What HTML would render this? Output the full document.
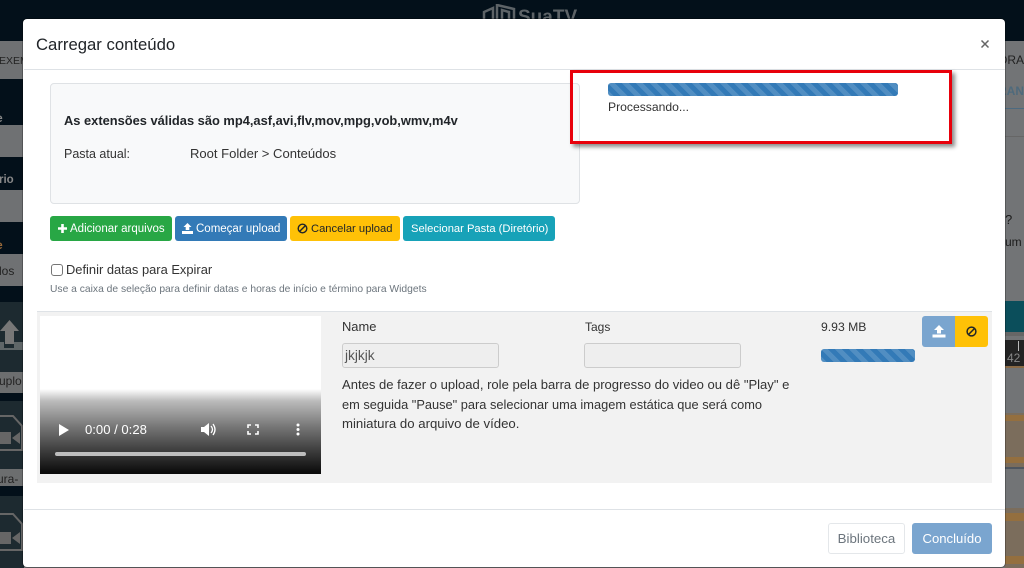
<!DOCTYPE html>
<html lang="pt"><head><meta charset="utf-8"><title>Carregar conteúdo</title>
<style>
*{box-sizing:border-box}
html,body{margin:0;padding:0;width:1024px;height:568px;overflow:hidden;background:#6f7173;font-family:"Liberation Sans",sans-serif;color:#212529}
.a{position:absolute}
.t{position:absolute;white-space:nowrap}
.btn{position:absolute;height:25px;top:216px;border-radius:3px}
.stripe{background-color:#337ab7;background-image:linear-gradient(45deg,rgba(255,255,255,.15) 25%,transparent 25%,transparent 50%,rgba(255,255,255,.15) 50%,rgba(255,255,255,.15) 75%,transparent 75%,transparent);background-size:14px 14px;border-radius:3px}
svg{position:absolute;display:block}
</style></head><body>
<!-- background -->
<div class="a" style="left:0;top:0;width:1024px;height:41px;background:#03101a"></div>
<div class="a" style="left:0;top:79px;width:24px;height:46px;background:#03101a"></div>
<div class="a" style="left:0;top:157px;width:24px;height:33px;background:#03101a"></div>
<div class="a" style="left:0;top:222px;width:24px;height:32px;background:#03101a"></div>
<div class="a" style="left:0;top:286px;width:24px;height:16px;background:#03101a"></div>
<div class="a" style="left:0;top:302px;width:24px;height:70px;background:#1d2a30"></div>
<div class="a" style="left:0;top:372px;width:24px;height:30px;background:#6c6e6f"></div>
<div class="a" style="left:0;top:393px;width:24px;height:8px;background:#03101a"></div>
<div class="a" style="left:0;top:401px;width:24px;height:68px;background:#1d2a30"></div>
<div class="a" style="left:0;top:469px;width:24px;height:17px;background:#6c6e6f"></div>
<div class="a" style="left:0;top:486px;width:24px;height:10px;background:#03101a"></div>
<div class="a" style="left:0;top:496px;width:24px;height:72px;background:#1d2a30"></div>
<div class="t" style="left:-1px;top:54px;font-size:10.5px;line-height:14px;color:#222">EXEM</div>
<div class="t" style="left:-4px;top:111px;font-size:12px;font-weight:bold;color:#888">e</div>
<div class="t" style="left:-1px;top:174px;font-size:11.5px;font-weight:bold;color:#888">rio</div>
<div class="t" style="left:-4px;top:238px;font-size:12px;font-weight:bold;color:#9a6a3a">e</div>
<div class="t" style="left:-5px;top:264px;font-size:12px;color:#222">dos</div>
<div class="t" style="left:-1px;top:374px;font-size:12px;color:#222">uplo</div>
<div class="t" style="left:-3px;top:472px;font-size:12px;color:#222">ura-</div>
<svg style="left:0;top:318px" width="24" height="34" viewBox="0 0 24 34"><path d="M0 24 H4 V30 H14 V24 H24 V32 H0Z" fill="#5f6668"/><path d="M9.5 2 L19 13 H14 V26 H5 V13 H0Z" fill="#777"/></svg>
<svg style="left:0;top:414px" width="24" height="42" viewBox="0 0 24 42"><path d="M0 2 H13 L22 12 V36 H0" fill="none" stroke="#666" stroke-width="2"/><path d="M0 18 H11 V30 H0Z M12 24 L20 18 V30Z" fill="#666"/></svg>
<svg style="left:0;top:512px" width="24" height="44" viewBox="0 0 24 44"><path d="M0 2 H13 L22 12 V38 H0" fill="none" stroke="#666" stroke-width="2"/><path d="M0 20 H11 V32 H0Z M12 26 L20 20 V32Z" fill="#666"/></svg>
<svg style="left:482px;top:4px" width="36" height="15" viewBox="0 0 36 15"><path d="M2 15 V8 L11 4 V15 M15 15 V1 L32 5 V15 M20 15 V6 L27 8 V15" fill="none" stroke="#5d6367" stroke-width="2.5"/></svg>
<div class="t" style="left:518px;top:7px;font-size:19px;font-weight:bold;color:#5d6367">SuaTV</div>
<!-- right bg -->
<div class="a" style="left:1005px;top:41px;width:19px;height:527px;background:#727476"></div>
<div class="t" style="left:1005px;top:53px;width:19px;overflow:hidden;font-size:12px;color:#222;direction:rtl">ORA</div>
<div class="t" style="left:1005px;top:84px;width:19px;overflow:hidden;font-size:12px;font-weight:bold;color:#4e6a7c;direction:rtl">RAN</div>
<div class="a" style="left:1005px;top:108px;width:19px;height:1px;background:#4c6a80"></div>
<div class="a" style="left:1005px;top:136px;width:19px;height:1px;background:#666"></div>
<div class="t" style="left:1005px;top:212px;font-size:13px;color:#1b1b1b">?</div>
<div class="t" style="left:1005px;top:235px;font-size:12px;color:#1b1b1b">um</div>
<div class="a" style="left:1005px;top:301px;width:19px;height:31px;background:#0b4e5b"></div>
<div class="a" style="left:1005px;top:332px;width:19px;height:4px;background:#666"></div>
<div class="a" style="left:1005px;top:340px;width:19px;height:26px;background:#232323"></div>
<div class="a" style="left:1018px;top:341px;width:1px;height:10px;background:#bbb"></div>
<div class="t" style="left:1007px;top:351px;font-size:12px;color:#888">42</div>
<div class="a" style="left:1005px;top:366px;width:19px;height:2px;background:#8a6a45"></div>
<div class="a" style="left:1005px;top:413px;width:19px;height:54px;background:#7b6d5c"></div>
<div class="a" style="left:1005px;top:415px;width:19px;height:6px;background:#946f3f"></div>
<div class="a" style="left:1005px;top:457px;width:19px;height:6px;background:#946f3f"></div>
<div class="a" style="left:1005px;top:467px;width:19px;height:2px;background:#4e5660"></div>
<div class="a" style="left:1005px;top:508px;width:19px;height:60px;background:#7b6d5c"></div>
<div class="a" style="left:1005px;top:513px;width:19px;height:8px;background:#946f3f"></div>
<div class="a" style="left:1005px;top:556px;width:19px;height:8px;background:#946f3f"></div>
<!-- modal -->
<div class="a" style="left:23px;top:19px;width:982px;height:548px;background:#fff;border-radius:4px 4px 4px 4px;box-shadow:0 0 0 1px rgba(0,0,0,.25)"></div>
<div class="t" style="left:36px;top:35px;font-size:16.7px;line-height:20px;color:#212529">Carregar conteúdo</div>
<svg style="left:980px;top:39px" width="10" height="10" viewBox="0 0 10 10"><path d="M1.5 1.5 L8.5 8.5 M8.5 1.5 L1.5 8.5" stroke="#666" stroke-width="1.5"/></svg>
<div class="a" style="left:24px;top:69px;width:981px;height:1px;background:#dee2e6"></div>
<!-- info panel -->
<div class="a" style="left:50px;top:83px;width:530px;height:121px;background:#f8f9fa;border:1px solid #dfe2e5;border-radius:4px"></div>
<div class="t" style="left:64px;top:113px;font-size:12.86px;line-height:16px;font-weight:bold;color:#212529">As extensões válidas são mp4,asf,avi,flv,mov,mpg,vob,wmv,m4v</div>
<div class="t" style="left:64px;top:146px;font-size:12.5px;line-height:16px;color:#333">Pasta atual:</div>
<div class="t" style="left:190px;top:146px;font-size:13.05px;line-height:16px;color:#333">Root Folder &gt; Conteúdos</div>
<!-- progress + highlight -->
<div class="a stripe" style="left:608px;top:83px;width:290px;height:13px"></div>
<div class="t" style="left:608px;top:99px;font-size:12.15px;line-height:16px;color:#333">Processando...</div>
<div class="a" style="left:570px;top:70px;width:382px;height:74px;border:3px solid #e8000b;box-shadow:3px 3px 4px rgba(0,0,0,.45)"></div>
<!-- buttons -->
<div class="btn" style="left:50px;width:122px;background:#28a745"></div>
<svg style="left:58px;top:224px" width="9" height="9" viewBox="0 0 9 9"><path d="M3.2 0 H5.8 V3.2 H9 V5.8 H5.8 V9 H3.2 V5.8 H0 V3.2 H3.2Z" fill="#fff"/></svg>
<div class="t" style="left:70px;top:222px;font-size:11.5px;line-height:15px;color:#fff">Adicionar arquivos</div>
<div class="btn" style="left:175px;width:112px;background:#337ab7"></div>
<svg style="left:182px;top:223px" width="11" height="11" viewBox="0 0 11 11"><path d="M5.5 0 L9.5 4 H7.3 V7 H3.7 V4 H1.5Z M0 8 H11 V11 H0Z" fill="#fff"/></svg>
<div class="t" style="left:196px;top:222px;font-size:11.5px;line-height:15px;color:#fff">Começar upload</div>
<div class="btn" style="left:290px;width:110px;background:#ffc107"></div>
<svg style="left:297px;top:223px" width="11" height="11" viewBox="0 0 11 11"><circle cx="5.5" cy="5.5" r="4.3" fill="none" stroke="#212529" stroke-width="1.4"/><path d="M2.5 8.5 L8.5 2.5" stroke="#212529" stroke-width="1.4"/></svg>
<div class="t" style="left:311px;top:222px;font-size:11.2px;line-height:15px;color:#212529">Cancelar upload</div>
<div class="btn" style="left:403px;width:152px;background:#17a2b8"></div>
<div class="t" style="left:411px;top:222px;font-size:11.2px;line-height:15px;color:#fff">Selecionar Pasta (Diretório)</div>
<!-- checkbox -->
<div class="a" style="left:51px;top:264px;width:12px;height:12px;border:1px solid #767676;border-radius:3px;background:#fff"></div>
<div class="t" style="left:66px;top:262px;font-size:12.9px;line-height:16px;color:#333">Definir datas para Expirar</div>
<div class="t" style="left:50px;top:283px;font-size:10.3px;line-height:14px;color:#6c757d">Use a caixa de seleção para definir datas e horas de início e término para Widgets</div>
<!-- file row -->
<div class="a" style="left:37px;top:311px;width:955px;height:172px;background:#f2f2f2;border-top:1px solid #dee2e6"></div>
<div class="a" style="left:40px;top:316px;width:281px;height:158px;background:linear-gradient(to bottom,#fff 0,#fff 73px,#bbb 85px,#787878 110px,#3c3c3c 135px,#0f0f0f 155px,#0b0b0b 158px)"></div>
<svg style="left:59px;top:424px" width="10" height="12" viewBox="0 0 10 12"><path d="M0 0 L10 6 L0 12Z" fill="#fff"/></svg>
<div class="t" style="left:85px;top:422px;font-size:13.1px;line-height:15px;color:#fff">0:00 / 0:28</div>
<svg style="left:201px;top:422px" width="16" height="15" viewBox="0 0 16 15"><path d="M0 5 H3 L8 1 V14 L3 10 H0Z" fill="#fff"/><path d="M10 4 Q13 7.5 10 11 M12 2 Q16 7.5 12 13" fill="none" stroke="#fff" stroke-width="1.3"/></svg>
<svg style="left:247px;top:424px" width="12" height="11" viewBox="0 0 12 11"><path d="M1 4 V1 H4 M8 1 H11 V4 M11 7 V10 H8 M4 10 H1 V7" fill="none" stroke="#fff" stroke-width="1.6"/></svg>
<svg style="left:296px;top:423px" width="4" height="13" viewBox="0 0 4 13"><circle cx="2" cy="2" r="1.5" fill="#fff"/><circle cx="2" cy="6.5" r="1.5" fill="#fff"/><circle cx="2" cy="11" r="1.5" fill="#fff"/></svg>
<div class="a" style="left:55px;top:452px;width:251px;height:4px;background:#bdbdbd;border-radius:2px"></div>
<div class="t" style="left:342px;top:319px;font-size:12.9px;line-height:16px;color:#333">Name</div>
<div class="t" style="left:585px;top:319px;font-size:12px;line-height:16px;color:#333">Tags</div>
<div class="a" style="left:342px;top:343px;width:157px;height:25px;background:#eee;border:1px solid #ccc;border-radius:3px"></div>
<div class="t" style="left:345px;top:348px;font-size:13.7px;line-height:16px;color:#555">jkjkjk</div>
<div class="a" style="left:584px;top:343px;width:157px;height:25px;background:#eee;border:1px solid #ccc;border-radius:3px"></div>
<div class="t" style="left:342px;top:375px;font-size:13.05px;line-height:20px;color:#333">Antes de fazer o upload, role pela barra de progresso do video ou dê "Play" e</div>
<div class="t" style="left:342px;top:395px;font-size:12.82px;line-height:20px;color:#333">em seguida "Pause" para selecionar uma imagem estática que será como</div>
<div class="t" style="left:342px;top:414px;font-size:13.2px;line-height:20px;color:#333">miniatura do arquivo de vídeo.</div>
<div class="t" style="left:821px;top:319px;font-size:12.2px;line-height:16px;color:#333">9.93 MB</div>
<div class="a stripe" style="left:821px;top:349px;width:94px;height:13px"></div>
<div class="a" style="left:922px;top:316px;width:33px;height:31px;background:#7aa5cf;border-radius:3px 0 0 3px"></div>
<svg style="left:932px;top:325px" width="14" height="13" viewBox="0 0 14 13"><path d="M7 0 L12 5 H9 V8.5 H5 V5 H2Z M0.5 9.5 H13.5 V12.5 H0.5Z" fill="#fff"/></svg>
<div class="a" style="left:955px;top:316px;width:33px;height:31px;background:#ffc107;border-radius:0 3px 3px 0"></div>
<svg style="left:966px;top:326px" width="11" height="11" viewBox="0 0 11 11"><circle cx="5.5" cy="5.5" r="4.4" fill="none" stroke="#212529" stroke-width="1.5"/><path d="M2.5 8.5 L8.5 2.5" stroke="#212529" stroke-width="1.5"/></svg>
<!-- footer -->
<div class="a" style="left:24px;top:509px;width:981px;height:1px;background:#dee2e6"></div>
<div class="a" style="left:828px;top:523px;width:77px;height:31px;background:#fff;border:1px solid #e4e7ea;border-radius:3px;font-size:13.3px;line-height:30px;text-align:center;color:#6c757d">Biblioteca</div>
<div class="a" style="left:912px;top:523px;width:80px;height:31px;background:#7aa5cf;border-radius:3px;font-size:13.1px;line-height:32px;text-align:center;color:#fff">Concluído</div>
</body></html>
